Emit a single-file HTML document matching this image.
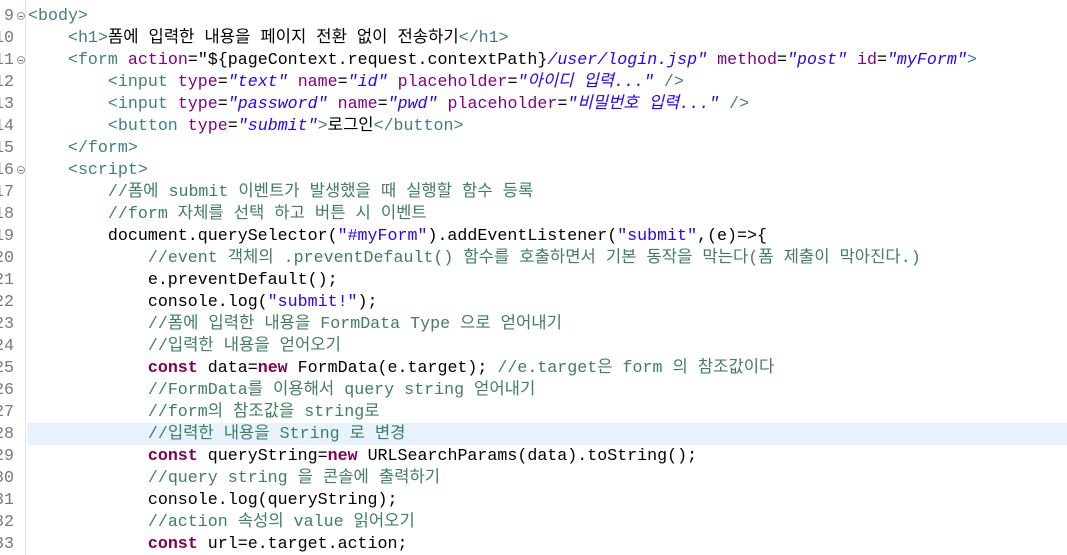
<!DOCTYPE html>
<html><head><meta charset="utf-8"><style>
body{margin:0;width:1067px;height:555px;overflow:hidden;background:#fff;position:relative;font-family:"Liberation Mono","Noto Sans CJK KR",monospace;font-size:16.65px;}
.gut{position:absolute;left:0;top:0;width:25px;height:555px;border-right:1px solid #e4e4e4;background:#fff;}
.n{position:absolute;right:1053px;width:40px;text-align:right;color:#787878;height:22px;line-height:22px;}
.f{position:absolute;left:17px;width:6px;height:6px;border:1px solid #999;border-radius:50%;font-size:0}
.f:after{content:"";position:absolute;left:1px;top:2.5px;width:4px;height:1px;background:#777}
.l{position:absolute;left:28px;height:22px;line-height:22px;white-space:pre;color:#000;}
.hl{position:absolute;left:27px;right:0;top:423px;height:22px;background:#e8f2fe;}
.t{color:#3f7f7f}.a{color:#7f007f}.v{color:#2a00ff;font-style:italic}.s{color:#2a00ff}.c{color:#3f7f5f}.k{color:#7f0055;font-weight:bold}
</style></head><body>
<div class="hl"></div>
<div class="gut"></div>
<div class="n" style="top:5px">9</div><div class="f" style="top:12px"></div>
<div class="n" style="top:27px">10</div>
<div class="n" style="top:49px">11</div><div class="f" style="top:56px"></div>
<div class="n" style="top:71px">12</div>
<div class="n" style="top:93px">13</div>
<div class="n" style="top:115px">14</div>
<div class="n" style="top:137px">15</div>
<div class="n" style="top:159px">16</div><div class="f" style="top:166px"></div>
<div class="n" style="top:181px">17</div>
<div class="n" style="top:203px">18</div>
<div class="n" style="top:225px">19</div>
<div class="n" style="top:247px">20</div>
<div class="n" style="top:269px">21</div>
<div class="n" style="top:291px">22</div>
<div class="n" style="top:313px">23</div>
<div class="n" style="top:335px">24</div>
<div class="n" style="top:357px">25</div>
<div class="n" style="top:379px">26</div>
<div class="n" style="top:401px">27</div>
<div class="n" style="top:423px">28</div>
<div class="n" style="top:445px">29</div>
<div class="n" style="top:467px">30</div>
<div class="n" style="top:489px">31</div>
<div class="n" style="top:511px">32</div>
<div class="n" style="top:533px">33</div>

<div class="l" style="top:5px"><span class="t">&lt;body&gt;</span></div>
<div class="l" style="top:27px">    <span class="t">&lt;h1&gt;</span>폼에 입력한 내용을 페이지 전환 없이 전송하기<span class="t">&lt;/h1&gt;</span></div>
<div class="l" style="top:49px">    <span class="t">&lt;form</span> <span class="a">action</span>=<span style="color:#000">"${pageContext.request.contextPath}</span><span class="v">/user/login.jsp"</span> <span class="a">method</span>=<span class="v">"post"</span> <span class="a">id</span>=<span class="v">"myForm"</span><span class="t">&gt;</span></div>
<div class="l" style="top:71px">        <span class="t">&lt;input</span> <span class="a">type</span>=<span class="v">"text"</span> <span class="a">name</span>=<span class="v">"id"</span> <span class="a">placeholder</span>=<span class="v">"아이디 입력..."</span> <span class="t">/&gt;</span></div>
<div class="l" style="top:93px">        <span class="t">&lt;input</span> <span class="a">type</span>=<span class="v">"password"</span> <span class="a">name</span>=<span class="v">"pwd"</span> <span class="a">placeholder</span>=<span class="v">"비밀번호 입력..."</span> <span class="t">/&gt;</span></div>
<div class="l" style="top:115px">        <span class="t">&lt;button</span> <span class="a">type</span>=<span class="v">"submit"</span><span class="t">&gt;</span>로그인<span class="t">&lt;/button&gt;</span></div>
<div class="l" style="top:137px">    <span class="t">&lt;/form&gt;</span></div>
<div class="l" style="top:159px">    <span class="t">&lt;script&gt;</span></div>
<div class="l" style="top:181px">        <span class="c">//폼에 submit 이벤트가 발생했을 때 실행할 함수 등록</span></div>
<div class="l" style="top:203px">        <span class="c">//form 자체를 선택 하고 버튼 시 이벤트</span></div>
<div class="l" style="top:225px">        document.querySelector(<span class="s">"#myForm"</span>).addEventListener(<span class="s">"submit"</span>,(e)=&gt;{</div>
<div class="l" style="top:247px">            <span class="c">//event 객체의 .preventDefault() 함수를 호출하면서 기본 동작을 막는다(폼 제출이 막아진다.)</span></div>
<div class="l" style="top:269px">            e.preventDefault();</div>
<div class="l" style="top:291px">            console.log(<span class="s">"submit!"</span>);</div>
<div class="l" style="top:313px">            <span class="c">//폼에 입력한 내용을 FormData Type 으로 얻어내기</span></div>
<div class="l" style="top:335px">            <span class="c">//입력한 내용을 얻어오기</span></div>
<div class="l" style="top:357px">            <span class="k">const</span> data=<span class="k">new</span> FormData(e.target); <span class="c">//e.target은 form 의 참조값이다</span></div>
<div class="l" style="top:379px">            <span class="c">//FormData를 이용해서 query string 얻어내기</span></div>
<div class="l" style="top:401px">            <span class="c">//form의 참조값을 string로</span></div>
<div class="l" style="top:423px">            <span class="c">//입력한 내용을 String 로 변경</span></div>
<div class="l" style="top:445px">            <span class="k">const</span> queryString=<span class="k">new</span> URLSearchParams(data).toString();</div>
<div class="l" style="top:467px">            <span class="c">//query string 을 콘솔에 출력하기</span></div>
<div class="l" style="top:489px">            console.log(queryString);</div>
<div class="l" style="top:511px">            <span class="c">//action 속성의 value 읽어오기</span></div>
<div class="l" style="top:533px">            <span class="k">const</span> url=e.target.action;</div>
</body></html>
